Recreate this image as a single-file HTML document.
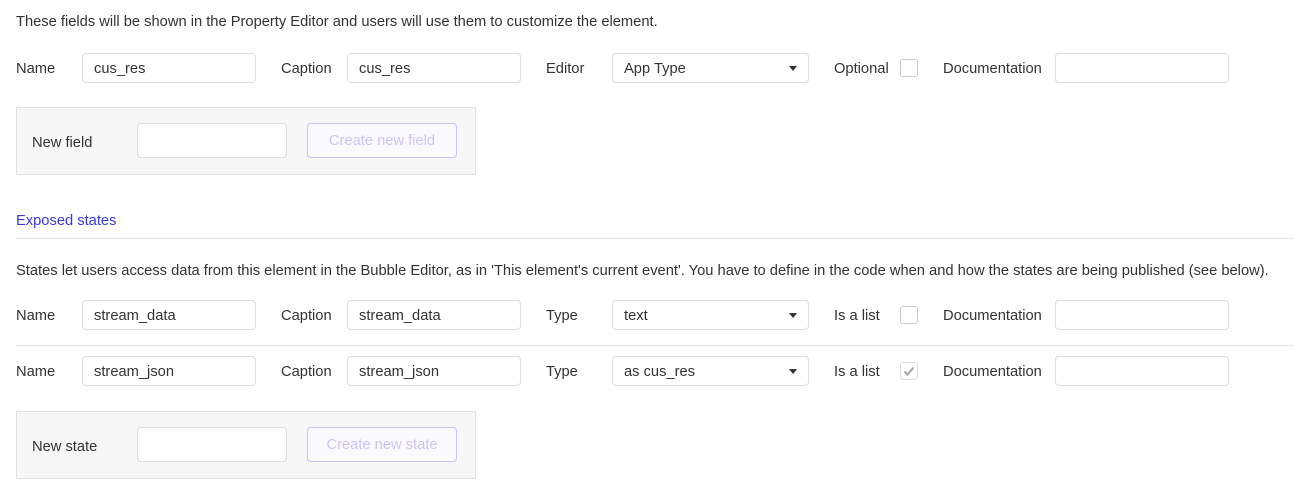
<!DOCTYPE html>
<html><head><style>
body{margin:0;width:1294px;height:499px;background:#fff;font-family:"Liberation Sans",sans-serif;font-size:14.7px;color:#333;position:relative;overflow:hidden}
.t{position:absolute;white-space:nowrap;line-height:16px;transform:translateY(-7px)}
.in{position:absolute;height:28px;border:1px solid #ddd;border-radius:4px;background:#fff;box-sizing:content-box}
.in span{position:absolute;left:11px;top:1px;line-height:28px;white-space:nowrap}
.cb{position:absolute;width:16px;height:16px;border:1px solid #ccc;border-radius:3px;background:#fff}
.box{position:absolute;left:16px;width:458px;height:66px;background:#f7f7f7;border:1px solid #e0e0e0}
.btn{position:absolute;width:148px;height:33px;border:1px solid #c9c5f2;border-radius:4px;background:#fafafe;color:#c9c5f2;text-align:center;line-height:35px;white-space:nowrap}
.arr{position:absolute;right:11px;top:12px;width:0;height:0;border-left:4px solid transparent;border-right:4px solid transparent;border-top:5px solid #333}
.hr{position:absolute;left:16px;right:0;height:1px;background:#e4e4e4}
</style></head><body>
<div class="t" style="left:16px;top:21px">These fields will be shown in the Property Editor and users will use them to customize the element.</div>

<div class="t" style="left:16px;top:68px">Name</div>
<div class="in" style="left:82px;top:53px;width:172px"><span>cus_res</span></div>
<div class="t" style="left:281px;top:68px">Caption</div>
<div class="in" style="left:347px;top:53px;width:172px"><span>cus_res</span></div>
<div class="t" style="left:546px;top:68px">Editor</div>
<div class="in" style="left:612px;top:53px;width:195px"><span>App Type</span><div class="arr"></div></div>
<div class="t" style="left:834px;top:68px">Optional</div>
<div class="cb" style="left:900px;top:59px"></div>
<div class="t" style="left:943px;top:68px">Documentation</div>
<div class="in" style="left:1055px;top:53px;width:172px"></div>

<div class="box" style="top:107px"></div>
<div class="t" style="left:32px;top:142px">New field</div>
<div class="in" style="left:137px;top:123px;width:148px;height:33px"></div>
<div class="btn" style="left:307px;top:123px">Create new field</div>

<div class="t" style="left:16px;top:220px;color:#3a3ad8">Exposed states</div>
<div class="hr" style="top:238px"></div>
<div class="t" style="left:16px;top:270px">States let users access data from this element in the Bubble Editor, as in 'This element's current event'. You have to define in the code when and how the states are being published (see below).</div>

<div class="t" style="left:16px;top:315px">Name</div>
<div class="in" style="left:82px;top:300px;width:172px"><span>stream_data</span></div>
<div class="t" style="left:281px;top:315px">Caption</div>
<div class="in" style="left:347px;top:300px;width:172px"><span>stream_data</span></div>
<div class="t" style="left:546px;top:315px">Type</div>
<div class="in" style="left:612px;top:300px;width:195px"><span>text</span><div class="arr"></div></div>
<div class="t" style="left:834px;top:315px">Is a list</div>
<div class="cb" style="left:900px;top:306px"></div>
<div class="t" style="left:943px;top:315px">Documentation</div>
<div class="in" style="left:1055px;top:300px;width:172px"></div>

<div class="hr" style="top:345px"></div>

<div class="t" style="left:16px;top:371px">Name</div>
<div class="in" style="left:82px;top:356px;width:172px"><span>stream_json</span></div>
<div class="t" style="left:281px;top:371px">Caption</div>
<div class="in" style="left:347px;top:356px;width:172px"><span>stream_json</span></div>
<div class="t" style="left:546px;top:371px">Type</div>
<div class="in" style="left:612px;top:356px;width:195px"><span>as cus_res</span><div class="arr"></div></div>
<div class="t" style="left:834px;top:371px">Is a list</div>
<div class="cb" style="left:900px;top:362px;border-color:#ddd"><svg width="16" height="16" viewBox="0 0 16 16"><path d="M3.5 8.5 L6.5 11.5 L12.5 4.5" stroke="#aaa" stroke-width="2.2" fill="none"/></svg></div>
<div class="t" style="left:943px;top:371px">Documentation</div>
<div class="in" style="left:1055px;top:356px;width:172px"></div>

<div class="box" style="top:411px"></div>
<div class="t" style="left:32px;top:446px">New state</div>
<div class="in" style="left:137px;top:427px;width:148px;height:33px"></div>
<div class="btn" style="left:307px;top:427px">Create new state</div>
</body></html>
